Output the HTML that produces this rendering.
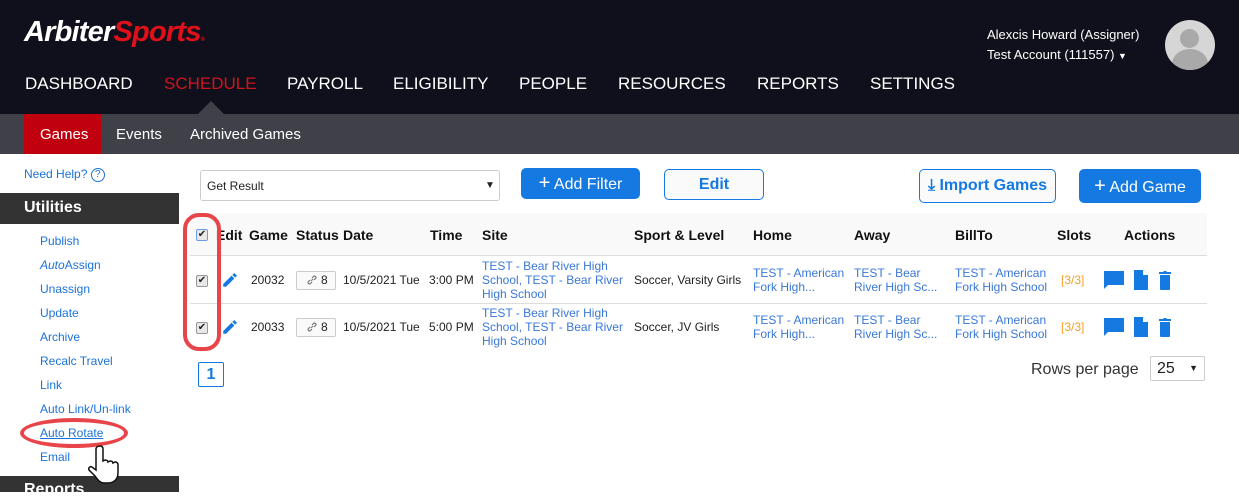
<!DOCTYPE html>
<html><head><meta charset="utf-8"><style>
*{margin:0;padding:0;box-sizing:border-box}
body{width:1239px;height:492px;overflow:hidden;background:#fff;font-family:"Liberation Sans",Arial,sans-serif;position:relative;color:#222}
.a{position:absolute;white-space:nowrap}
.hdr{left:0;top:0;width:1239px;height:114px;background:#10101c}
.sub{left:0;top:114px;width:1239px;height:40px;background:#404049}
.nav{top:74px;font-size:17px;color:#fff}
.sn{top:126px;font-size:15px;color:#fff}
.lnk{color:#1a73d9}
.side{left:40px;font-size:12px;color:#1a73d9}
.th{top:227px;font-size:14px;font-weight:bold;color:#111}
.td{font-size:12px;color:#222}
.bl{font-size:12px;color:#3a78d8;line-height:14px}
.cb{width:12px;height:12px;border:1px solid #999;background:#e8e8e8;border-radius:2px;font-size:10px;line-height:10px;text-align:center;color:#222}
.btn{background:#1479e0;color:#fff;border-radius:5px;font-size:16px;text-align:center}
.obtn{border:1px solid #1479e0;color:#1479e0;border-radius:5px;font-size:16px;font-weight:bold;text-align:center;background:#fafafa}
</style></head><body>
<div class="a hdr"></div>
<div class="a" style="left:24px;top:16px;font-size:29px;font-weight:bold;font-style:italic;letter-spacing:-0.8px;color:#fff">Arbiter<span style="color:#e0101a">Sports</span><span style="font-size:6px;color:#e0101a">®</span></div>
<div class="a nav" style="left:25px">DASHBOARD</div>
<div class="a nav" style="left:164px;color:#d0141c">SCHEDULE</div>
<div class="a nav" style="left:287px">PAYROLL</div>
<div class="a nav" style="left:393px">ELIGIBILITY</div>
<div class="a nav" style="left:519px">PEOPLE</div>
<div class="a nav" style="left:618px">RESOURCES</div>
<div class="a nav" style="left:757px">REPORTS</div>
<div class="a nav" style="left:870px">SETTINGS</div>
<div class="a" style="left:987px;top:27px;font-size:13px;color:#fff">Alexcis Howard (Assigner)</div>
<div class="a" style="left:987px;top:47px;font-size:13px;color:#fff">Test Account (111557) <span style="font-size:9px">▼</span></div>
<div class="a" style="left:1165px;top:20px;width:50px;height:50px;border-radius:50%;background:#d6d6d6;overflow:hidden">
<div class="a" style="left:15px;top:9px;width:19px;height:19px;border-radius:50%;background:#a9a9a9"></div>
<div class="a" style="left:7px;top:29px;width:36px;height:30px;border-radius:50% 50% 0 0;background:#a9a9a9"></div></div>
<div class="a sub"></div>
<div class="a" style="left:198px;top:101px;width:0;height:0;border-left:13px solid transparent;border-right:13px solid transparent;border-bottom:13px solid #404049"></div>
<div class="a" style="left:24px;top:114px;width:77px;height:40px;background:#c0000f"></div>
<div class="a sn" style="left:40px">Games</div>
<div class="a sn" style="left:116px">Events</div>
<div class="a sn" style="left:190px">Archived Games</div>

<div class="a lnk" style="left:24px;top:167px;font-size:12px">Need Help? <span style="display:inline-block;width:14px;height:14px;border:1.5px solid #1a73d9;border-radius:50%;font-size:10px;text-align:center;line-height:11px;vertical-align:middle">?</span></div>
<div class="a" style="left:0;top:193px;width:179px;height:31px;background:#333"></div>
<div class="a" style="left:24px;top:199px;font-size:16px;font-weight:bold;color:#fff">Utilities</div>
<div class="a side" style="top:234px">Publish</div>
<div class="a side" style="top:258px"><i>Auto</i>Assign</div>
<div class="a side" style="top:282px">Unassign</div>
<div class="a side" style="top:306px">Update</div>
<div class="a side" style="top:330px">Archive</div>
<div class="a side" style="top:354px">Recalc Travel</div>
<div class="a side" style="top:378px">Link</div>
<div class="a side" style="top:402px">Auto Link/Un-link</div>
<div class="a side" style="top:426px;text-decoration:underline">Auto Rotate</div>
<div class="a side" style="top:450px">Email</div>
<div class="a" style="left:0;top:476px;width:179px;height:16px;background:#333"></div>
<div class="a" style="left:24px;top:481px;font-size:16px;font-weight:bold;color:#fff">Reports</div>
<div class="a" style="left:20px;top:418px;width:108px;height:30px;border:4px solid #e8454a;border-radius:50%"></div>
<svg class="a" style="left:86px;top:444px" width="36" height="40" viewBox="0 0 36 40"><path d="M14 2c2 0 3 1 3 3v12l2-1c2 0 3 1 3 2l2-1c2 0 3 1 3 2l2-1c2 0 3 1 3 3v8c0 6-4 10-10 10h-4c-4 0-6-3-9-7l-6-6c-1-2 1-4 3-3l4 3V5c0-2 2-3 4-3z" fill="#fff" stroke="#111" stroke-width="1.5"/></svg>

<div class="a" style="left:200px;top:170px;width:300px;height:31px;border:1px solid #ccc;border-radius:3px"></div>
<div class="a" style="left:207px;top:179px;font-size:12px">Get Result</div>
<div class="a" style="left:485px;top:180px;font-size:10px">▼</div>
<div class="a btn" style="left:521px;top:168px;width:119px;height:31px;line-height:31px"><b style="font-size:20px;font-weight:normal">+</b> Add Filter</div>
<div class="a obtn" style="left:664px;top:169px;width:100px;height:31px;line-height:29px">Edit</div>
<div class="a obtn" style="left:919px;top:169px;width:137px;height:34px;line-height:32px">⤓ Import Games</div>
<div class="a btn" style="left:1079px;top:169px;width:122px;height:34px;line-height:34px"><b style="font-size:20px;font-weight:normal">+</b> Add Game</div>

<div class="a" style="left:190px;top:213px;width:1017px;height:43px;background:#f9f9f9;border-bottom:1px solid #ddd"></div>
<div class="a" style="left:190px;top:303px;width:1017px;height:1px;background:#ddd"></div>
<div class="a cb" style="left:196px;top:229px;border-color:#6a9de8">✔</div>
<div class="a th" style="left:216px">Edit</div>
<div class="a th" style="left:249px">Game</div>
<div class="a th" style="left:296px">Status</div>
<div class="a th" style="left:343px">Date</div>
<div class="a th" style="left:430px">Time</div>
<div class="a th" style="left:482px">Site</div>
<div class="a th" style="left:634px">Sport &amp; Level</div>
<div class="a th" style="left:753px">Home</div>
<div class="a th" style="left:854px">Away</div>
<div class="a th" style="left:955px">BillTo</div>
<div class="a th" style="left:1057px">Slots</div>
<div class="a th" style="left:1124px">Actions</div>

<!-- row 1 -->
<div class="a cb" style="left:196px;top:275px">✔</div>
<svg class="a" style="left:221px;top:271px" width="18" height="18" viewBox="0 0 24 24"><path d="M3 17.25V21h3.75L17.8 9.94l-3.75-3.75L3 17.25zM20.7 7.04a1 1 0 000-1.41l-2.34-2.34a1 1 0 00-1.41 0l-1.83 1.83 3.75 3.75 1.83-1.83z" fill="#1479e0"/></svg>
<div class="a td" style="left:251px;top:273px">20032</div>
<div class="a td" style="left:296px;top:271px;width:40px;height:19px;border:1px solid #ccc;border-radius:2px;background:#fafafa;line-height:17px;padding-left:10px"><svg width="10" height="10" viewBox="0 0 10 10" style="vertical-align:-1px;margin-right:4px"><path d="M4 6l2-2M3 5L1.5 6.5a1.4 1.4 0 002 2L5 7M5 3l1.5-1.5a1.4 1.4 0 012 2L7 5" stroke="#777" stroke-width="1.2" fill="none"/></svg>8</div>
<div class="a td" style="left:343px;top:273px">10/5/2021 Tue</div>
<div class="a td" style="left:429px;top:273px">3:00 PM</div>
<div class="a bl" style="left:482px;top:259px">TEST - Bear River High<br>School, TEST - Bear River<br>High School</div>
<div class="a td" style="left:634px;top:273px">Soccer, Varsity Girls</div>
<div class="a bl" style="left:753px;top:266px">TEST - American<br>Fork High...</div>
<div class="a bl" style="left:854px;top:266px">TEST - Bear<br>River High Sc...</div>
<div class="a bl" style="left:955px;top:266px">TEST - American<br>Fork High School</div>
<div class="a td" style="left:1061px;top:273px;color:#f5a020">[3/3]</div>
<!-- row 2 -->
<div class="a cb" style="left:196px;top:322px">✔</div>
<svg class="a" style="left:221px;top:318px" width="18" height="18" viewBox="0 0 24 24"><path d="M3 17.25V21h3.75L17.8 9.94l-3.75-3.75L3 17.25zM20.7 7.04a1 1 0 000-1.41l-2.34-2.34a1 1 0 00-1.41 0l-1.830 1.83 3.75 3.75 1.83-1.83z" fill="#1479e0"/></svg>
<div class="a td" style="left:251px;top:320px">20033</div>
<div class="a td" style="left:296px;top:318px;width:40px;height:19px;border:1px solid #ccc;border-radius:2px;background:#fafafa;line-height:17px;padding-left:10px"><svg width="10" height="10" viewBox="0 0 10 10" style="vertical-align:-1px;margin-right:4px"><path d="M4 6l2-2M3 5L1.5 6.5a1.4 1.4 0 002 2L5 7M5 3l1.5-1.5a1.4 1.4 0 012 2L7 5" stroke="#777" stroke-width="1.2" fill="none"/></svg>8</div>
<div class="a td" style="left:343px;top:320px">10/5/2021 Tue</div>
<div class="a td" style="left:429px;top:320px">5:00 PM</div>
<div class="a bl" style="left:482px;top:306px">TEST - Bear River High<br>School, TEST - Bear River<br>High School</div>
<div class="a td" style="left:634px;top:320px">Soccer, JV Girls</div>
<div class="a bl" style="left:753px;top:313px">TEST - American<br>Fork High...</div>
<div class="a bl" style="left:854px;top:313px">TEST - Bear<br>River High Sc...</div>
<div class="a bl" style="left:955px;top:313px">TEST - American<br>Fork High School</div>
<div class="a td" style="left:1061px;top:320px;color:#f5a020">[3/3]</div>

<svg class="a" style="left:1104px;top:269px" width="72" height="22" viewBox="0 0 72 22"><path d="M0 2h20v14H4l-4 4z" fill="#1479e0"/><path d="M30 1h9l5 5v15H30z" fill="#1479e0"/><path d="M39 1v5h5" fill="#fff"/><path d="M55 3h4l1-1h2l1 1h4v2H55zM56 6h10v14a1 1 0 01-1 1h-8a1 1 0 01-1-1z" fill="#1479e0"/></svg>
<svg class="a" style="left:1104px;top:316px" width="72" height="22" viewBox="0 0 72 22"><path d="M0 2h20v14H4l-4 4z" fill="#1479e0"/><path d="M30 1h9l5 5v15H30z" fill="#1479e0"/><path d="M39 1v5h5" fill="#fff"/><path d="M55 3h4l1-1h2l1 1h4v2H55zM56 6h10v14a1 1 0 01-1 1h-8a1 1 0 01-1-1z" fill="#1479e0"/></svg>

<div class="a" style="left:183px;top:213px;width:38px;height:138px;border:4px solid #e8454a;border-radius:16px"></div>

<div class="a" style="left:198px;top:362px;width:26px;height:25px;border:1px solid #1479e0;border-radius:2px;color:#1479e0;font-size:16px;font-weight:bold;text-align:center;line-height:23px">1</div>
<div class="a" style="left:1031px;top:361px;font-size:16px;color:#333">Rows per page</div>
<div class="a" style="left:1150px;top:356px;width:55px;height:25px;border:1px solid #ccc;border-radius:2px;font-size:16px;line-height:23px;padding-left:6px">25<span style="position:absolute;right:6px;font-size:9px">▼</span></div>
</body></html>
